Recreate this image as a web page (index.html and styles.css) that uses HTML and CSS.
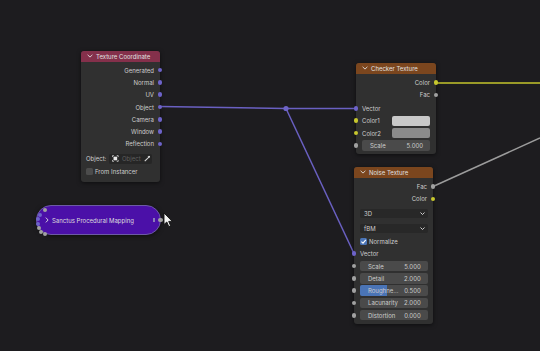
FILE: index.html
```html
<!DOCTYPE html>
<html lang="en">
<head>
    <meta charset="UTF-8">
    <meta name="viewport" content="width=device-width, initial-scale=1.0">
    <title>Node Editor</title>
    <link rel="stylesheet" href="styles.css">
</head>
<body>
    <div class="editor">
        <svg class="links" width="540" height="351" viewBox="0 0 540 351">
            <path d="M160 106.5 L286 108.5 L355 108.5" class="link vec"/>
            <path d="M286 108.5 L354 253.5" class="link vec"/>
            <path d="M436 83 L540 83" class="link col"/>
            <path d="M433 186.5 L540 138" class="link flt"/>
            <circle cx="286" cy="108.5" r="2.6" fill="#6e64c8"/>
        </svg>

        <!-- Texture Coordinate -->
        <div class="node tex-coord">
            <div class="node-header input">
                <svg class="chev" width="6" height="4" viewBox="0 0 6 4"><path d="M0.6 0.8 L3 3.1 L5.4 0.8"/></svg>
                Texture Coordinate
            </div>
            <div class="node-body">
                <div class="row out">Generated<span class="sock vec"></span></div>
                <div class="row out">Normal<span class="sock vec"></span></div>
                <div class="row out">UV<span class="sock vec"></span></div>
                <div class="row out">Object<span class="sock vec"></span></div>
                <div class="row out">Camera<span class="sock vec"></span></div>
                <div class="row out">Window<span class="sock vec"></span></div>
                <div class="row out">Reflection<span class="sock vec"></span></div>
                <div class="row obj-row">
                    <span class="obj-label">Object:</span>
                    <span class="obj-field">
                        <svg width="7" height="7" viewBox="0 0 7 7">
                            <path d="M0.5 2 V0.5 H2 M5 0.5 H6.5 V2 M6.5 5 V6.5 H5 M2 6.5 H0.5 V5" fill="none" stroke="#d8d8d8" stroke-width="0.8"/>
                            <rect x="1.6" y="1.6" width="3.8" height="3.8" fill="#e8e8e8"/>
                        </svg>
                        <span class="dim">Object</span>
                        <svg class="pipette" width="7" height="7" viewBox="0 0 7 7">
                            <path d="M0.8 6.2 L4 3" stroke="#d8d8d8" stroke-width="1.1"/>
                            <path d="M3.6 2 L5.2 0.6 Q6.4 0.6 6.4 1.8 L5 3.4 Z" fill="#e0e0e0"/>
                        </svg>
                    </span>
                </div>
                <div class="row check-row">
                    <span class="checkbox"></span>From Instancer
                </div>
            </div>
        </div>

        <!-- Checker Texture -->
        <div class="node checker">
            <div class="node-header texture">
                <svg class="chev" width="6" height="4" viewBox="0 0 6 4"><path d="M0.6 0.8 L3 3.1 L5.4 0.8"/></svg>
                Checker Texture
            </div>
            <div class="node-body">
                <div class="row out">Color<span class="sock col"></span></div>
                <div class="row out">Fac<span class="sock flt"></span></div>
                <div class="row in first-in"><span class="sock vec"></span>Vector</div>
                <div class="row in"><span class="sock col"></span>Color1<span class="swatch light"></span></div>
                <div class="row in"><span class="sock col"></span>Color2<span class="swatch mid"></span></div>
                <div class="row in"><span class="sock flt"></span>
                    <div class="field"><span>Scale</span><span>5.000</span></div>
                </div>
            </div>
        </div>

        <!-- Noise Texture -->
        <div class="node noise">
            <div class="node-header texture">
                <svg class="chev" width="6" height="4" viewBox="0 0 6 4"><path d="M0.6 0.8 L3 3.1 L5.4 0.8"/></svg>
                Noise Texture
            </div>
            <div class="node-body">
                <div class="row out">Fac<span class="sock flt"></span></div>
                <div class="row out">Color<span class="sock col"></span></div>
                <div class="row menu-row first-menu">
                    <div class="menu"><span>3D</span><svg width="5" height="3" viewBox="0 0 5 3"><path d="M0.5 0.5 L2.5 2.5 L4.5 0.5"/></svg></div>
                </div>
                <div class="row menu-row">
                    <div class="menu"><span>fBM</span><svg width="5" height="3" viewBox="0 0 5 3"><path d="M0.5 0.5 L2.5 2.5 L4.5 0.5"/></svg></div>
                </div>
                <div class="row check-row norm">
                    <span class="checkbox on">
                        <svg width="7" height="7" viewBox="0 0 7 7"><path d="M1.4 3.6 L3 5.2 L5.8 1.8" fill="none" stroke="#fff" stroke-width="1.1"/></svg>
                    </span>Normalize
                </div>
                <div class="row in"><span class="sock vec"></span>Vector</div>
                <div class="row in"><span class="sock flt"></span>
                    <div class="field"><span>Scale</span><span>5.000</span></div>
                </div>
                <div class="row in"><span class="sock flt"></span>
                    <div class="field"><span>Detail</span><span>2.000</span></div>
                </div>
                <div class="row in"><span class="sock flt"></span>
                    <div class="field slider"><span class="fill" style="width: 40%"></span><span>Roughne...</span><span>0.500</span></div>
                </div>
                <div class="row in"><span class="sock flt"></span>
                    <div class="field"><span>Lacunarity</span><span>2.000</span></div>
                </div>
                <div class="row in"><span class="sock flt"></span>
                    <div class="field"><span>Distortion</span><span>0.000</span></div>
                </div>
            </div>
        </div>

        <!-- collapsed group node -->
        <div class="group-node">
            <span class="gsock" style="left: 6px; top: 2px"></span>
            <span class="gsock v" style="left: 1px; top: 6.5px"></span>
            <span class="gsock v" style="left: -1.5px; top: 11px"></span>
            <span class="gsock v" style="left: -1.5px; top: 15.5px"></span>
            <span class="gsock" style="left: -0.5px; top: 20px"></span>
            <span class="gsock" style="left: 1.5px; top: 23.5px"></span>
            <span class="gsock" style="left: 5.5px; top: 26px"></span>
            <svg class="chev-r" width="4" height="6" viewBox="0 0 4 6"><path d="M0.8 0.6 L3.1 3 L0.8 5.4"/></svg>
            <span class="group-title">Sanctus Procedural Mapping</span>
            <span class="grip"></span>
            <span class="gsock out"></span>
        </div>

        <svg class="cursor" width="11" height="16" viewBox="0 0 11 16">
            <path d="M1 1 L1 12.5 L3.8 10 L5.8 14.6 L7.6 13.8 L5.7 9.4 L9.3 9.4 Z" fill="#f4f4f4" stroke="#111" stroke-width="0.9"/>
        </svg>
    </div>
</body>
</html>
```

FILE: styles.css
```css
body {
    margin: 0;
    background-color: #1d1c1f;
    font-family: 'Inter', 'DejaVu Sans', sans-serif;
    font-size: 6px;
    color: #cdcdcd;
}

.editor {
    position: relative;
    width: 540px;
    height: 351px;
    overflow: hidden;
    background-color: #1d1c1f;
}

.links {
    position: absolute;
    left: 0;
    top: 0;
}

.link {
    fill: none;
    stroke-width: 1.5;
}

.link.vec { stroke: #6a60c2; }
.link.col { stroke: #c4c42c; }
.link.flt { stroke: #9c9c9c; }

/* nodes */
.node {
    position: absolute;
    border-radius: 3px;
    background-color: #303030;
    box-shadow: 0 1px 4px rgba(0, 0, 0, 0.55);
}

.tex-coord { left: 81px; top: 51px; width: 79px; }
.checker   { left: 356px; top: 63px; width: 80px; }
.noise     { left: 354px; top: 167px; width: 79px; }

.node-header {
    height: 10.5px;
    display: flex;
    align-items: center;
    gap: 3px;
    padding-left: 6px;
    border-radius: 3px 3px 0 0;
    color: #e0e0e0;
}

.node-header.input   { background-color: #84304b; }
.node-header.texture { background-color: #7b461e; }

.chev path,
.chev-r path,
.menu path {
    fill: none;
    stroke: #e0e0e0;
    stroke-width: 0.9;
}

.node-body {
    padding: 3px 0 3px;
}

.tex-coord .node-body { padding-top: 2.5px; padding-bottom: 4px; }

.row {
    position: relative;
    height: 12.3px;
    display: flex;
    align-items: center;
}

.row.out {
    justify-content: flex-end;
    padding-right: 6px;
}

.row.in {
    padding-left: 6px;
    padding-right: 6px;
}

.first-in { margin-top: 1.2px; }

.sock {
    position: absolute;
    top: 50%;
    width: 4.6px;
    height: 4.6px;
    margin-top: -2.3px;
    border-radius: 50%;
}

.row.out .sock { right: -2.3px; }
.row.in .sock  { left: -2.3px; }

.sock.vec { background-color: #6d63c9; }
.sock.col { background-color: #c7c72e; }
.sock.flt { background-color: #a1a1a1; }

/* object picker */
.obj-row {
    margin-top: 2px;
    height: 13px;
    padding-left: 5px;
    gap: 2px;
}

.obj-field {
    display: flex;
    align-items: center;
    gap: 3px;
    height: 10px;
    padding: 0 2px 0 3px;
    margin-left: 1px;
    border-radius: 2px;
    background-color: #262626;
    width: 38px;
}

.obj-field .dim {
    color: #5e5e5e;
    flex-grow: 1;
}

.check-row {
    padding-left: 5px;
    gap: 2px;
    height: 13px;
}

.checkbox {
    display: flex;
    align-items: center;
    justify-content: center;
    width: 7px;
    height: 7px;
    border-radius: 1.5px;
    background-color: #4c4c4c;
}

.checkbox.on { background-color: #4a74b6; }

/* swatches and fields */
.swatch {
    margin-left: auto;
    width: 38px;
    height: 9.6px;
    border-radius: 2px;
}

.swatch.light { background-color: #c9c9c9; }
.swatch.mid   { background-color: #8b8b8b; }

.field {
    position: relative;
    flex-grow: 1;
    height: 10.5px;
    display: flex;
    align-items: center;
    justify-content: space-between;
    padding: 0 7px 0 8px;
    border-radius: 2px;
    background-color: #4a4a4a;
    overflow: hidden;
}

.field span {
    position: relative;
}

.field .fill {
    position: absolute;
    left: 0;
    top: 0;
    bottom: 0;
    background-color: #4a74b6;
}

.noise .row.in { padding-right: 5.3px; }

.menu-row {
    padding: 0 5.3px 0 6px;
    height: 12px;
}

.first-menu { margin-top: 2.5px; }
.menu-row + .menu-row { margin-top: 2.7px; }

.menu {
    flex-grow: 1;
    height: 9px;
    display: flex;
    align-items: center;
    justify-content: space-between;
    padding: 0 3px 0 4px;
    border-radius: 2px;
    background-color: #282828;
}

.norm {
    margin-top: 1.3px;
    padding-left: 6px;
    height: 12px;
}

/* collapsed group */
.group-node {
    position: absolute;
    left: 36px;
    top: 205px;
    width: 125px;
    height: 30px;
    box-sizing: border-box;
    border-radius: 15px;
    border: 1px solid #6d5aa6;
    background-color: #4b10a8;
    display: flex;
    align-items: center;
    padding-left: 8px;
    gap: 3px;
    color: #dedede;
    box-shadow: 0 1px 4px rgba(0, 0, 0, 0.5);
}

.gsock {
    position: absolute;
    width: 4.4px;
    height: 4.4px;
    border-radius: 50%;
    background-color: #a1a1a1;
}

.gsock.v { background-color: #6d63c9; }

.gsock.out {
    left: auto;
    right: -2.6px;
    top: 12px;
}

.group-title {
    flex-grow: 1;
}

.grip {
    width: 2px;
    height: 4px;
    margin-right: 5px;
    background-color: #8b7db8;
}

.cursor {
    position: absolute;
    left: 163px;
    top: 212px;
}
```
